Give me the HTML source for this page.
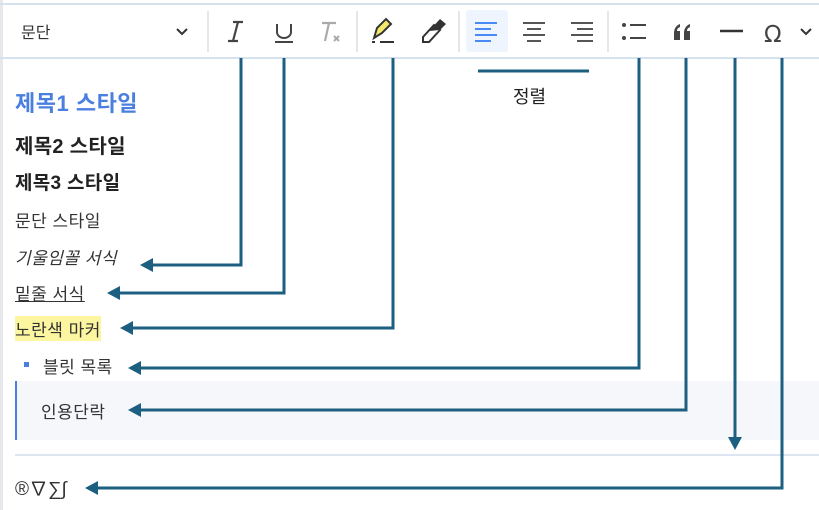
<!DOCTYPE html>
<html><head><meta charset="utf-8"><style>
body{margin:0;width:819px;height:510px;overflow:hidden;background:#fff;font-family:"Liberation Sans","Noto Sans CJK KR",sans-serif;position:relative}
.a{position:absolute;white-space:nowrap}
.t{color:#333;font-size:17px;letter-spacing:0.5px}
</style></head><body>
<div class="a" style="left:0;top:0;width:3px;height:510px;background:#e6e8ec"></div>
<div class="a" style="left:0;top:3px;width:819px;height:2px;background:#d7e2ef"></div>
<div class="a" style="left:0;top:57px;width:819px;height:2px;background:#d7e2ef"></div>
<div class="a" style="left:21px;top:19px;font-size:16px;color:#333">문단</div>
<svg class="a" style="left:0;top:0" width="819" height="60">
<path d="M177 29l5 5 5-5" fill="none" stroke="#333" stroke-width="2"/>
<line x1="208" y1="11" x2="208" y2="52" stroke="#ccc"/>
<line x1="357" y1="11" x2="357" y2="52" stroke="#ccc"/>
<line x1="459" y1="11" x2="459" y2="52" stroke="#ccc"/>
<line x1="608" y1="11" x2="608" y2="52" stroke="#ccc"/>
<path d="M233 22h10M228 41h10M238 22l-5 19" fill="none" stroke="#444" stroke-width="2.2"/>
<path d="M277 24v8a7 6 0 0 0 14 0v-8M275 42h18" fill="none" stroke="#444" stroke-width="2"/>
<path d="M322 23h14M329 23l-4 18" fill="none" stroke="#aaa" stroke-width="2.2"/>
<path d="M334 36l5 5M339 36l-5 5" stroke="#aaa" stroke-width="2"/>
<path d="M374 38l3-10 9-9 5 5-9 9z" fill="#f4e86a" stroke="#333" stroke-width="2"/>
<path d="M372 42h3M380 42h14" stroke="#333" stroke-width="2"/>
<path d="M423 37l11-12 6 5-11 12h-6z" fill="#fff" stroke="#333" stroke-width="2"/>
<path d="M429 31l11-12 6 5-6 6z" fill="#333"/>
<rect x="466" y="10" width="42" height="42" rx="3" fill="#eef5ff"/>
<path d="M475 23h22M475 29h16M475 35h22M475 41h16" stroke="#4a8af4" stroke-width="2"/>
<path d="M523 23h22M527 29h14M523 35h22M527 41h14" stroke="#555" stroke-width="2"/>
<path d="M571 23h22M577 29h16M571 35h22M577 41h16" stroke="#555" stroke-width="2"/>
<circle cx="624" cy="25" r="2" fill="#444"/><circle cx="624" cy="38" r="2" fill="#444"/>
<path d="M630 25h16M630 38h16" stroke="#444" stroke-width="2"/>
<path d="M674 40v-7c0-5 3-8 6-9v3c-2 1-3 2-3 4h3v9zM684 40v-7c0-5 3-8 6-9v3c-2 1-3 2-3 4h3v9z" fill="#444"/>
<path d="M720 31h23" stroke="#333" stroke-width="2.5"/>
<text x="764" y="42" font-family="DejaVu Sans" font-size="23" fill="#444">Ω</text>
<path d="M801 29l5 5 5-5" fill="none" stroke="#333" stroke-width="2"/>
</svg>
<div class="a" style="left:15px;top:86px;font-size:22px;font-weight:bold;color:#4a7fe0;letter-spacing:0.5px">제목1 스타일</div>
<div class="a" style="left:15px;top:130px;font-size:20px;font-weight:bold;color:#222;letter-spacing:0.3px">제목2 스타일</div>
<div class="a" style="left:15px;top:168px;font-size:19px;font-weight:bold;color:#222;letter-spacing:0.3px">제목3 스타일</div>
<div class="a t" style="left:15px;top:207px">문단 스타일</div>
<div class="a t" style="left:15px;top:244px;font-style:italic">기울임꼴 서식</div>
<div class="a t" style="left:15px;top:280px;text-decoration:underline">밑줄 서식</div>
<div class="a t" style="left:15px;top:316px;background:#fdf6a0">노란색 마커</div>
<div class="a" style="left:24px;top:362px;width:5px;height:5px;background:#4a7fe0"></div>
<div class="a t" style="left:43px;top:353px">블릿 목록</div>
<div class="a" style="left:15px;top:381px;width:804px;height:59px;background:#f5f7fb;border-left:2px solid #4a7fe0;box-sizing:border-box"></div>
<div class="a t" style="left:41px;top:398px">인용단락</div>
<div class="a" style="left:15px;top:454px;width:804px;height:2px;background:#dde6f0"></div>
<div class="a t" style="left:15px;top:474px;font-size:19px;letter-spacing:0">®∇∑∫</div>
<div class="a" style="left:513px;top:83px;font-size:18px;color:#222">정렬</div>
<svg class="a" style="left:0;top:0" width="819" height="510">
<g fill="none" stroke="#1d5f80" stroke-width="3">
<path d="M478 71h111"/>
<path d="M241 58v207h-90"/>
<path d="M284 58v235h-166"/>
<path d="M393 58v270h-262"/>
<path d="M639 58v310h-500"/>
<path d="M686 58v352h-547"/>
<path d="M735 58v380"/>
<path d="M782 58v430h-686"/>
</g>
<g fill="#1d5f80">
<path d="M140 265l13-7v14z"/>
<path d="M107 293l13-7v14z"/>
<path d="M120 328l13-7v14z"/>
<path d="M128 368l13-7v14z"/>
<path d="M128 410l13-7v14z"/>
<path d="M735 450l-7-13h14z"/>
<path d="M85 488l13-7v14z"/>
</g>
</svg>
</body></html>
